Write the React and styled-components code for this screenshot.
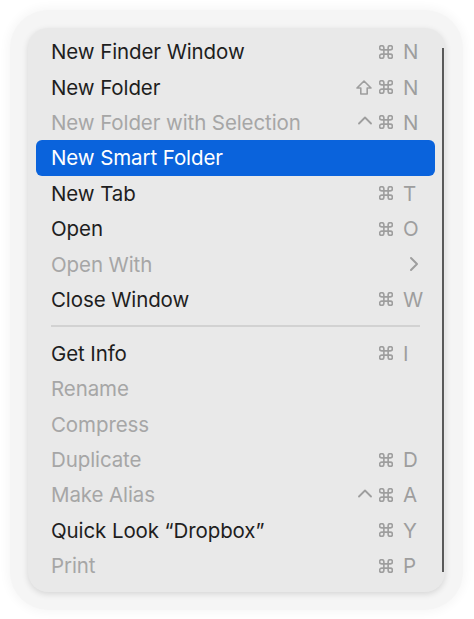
import React from 'react';
import styled, { createGlobalStyle } from 'styled-components';

const GlobalStyle = createGlobalStyle`
  html, body {
    margin: 0;
    padding: 0;
    background: #ffffff;
  }
  body {
    font-family: Inter, "Noto Sans", "Liberation Sans", sans-serif;
  }
`;

const Page = styled.div`
  width: 474px;
  height: 619px;
  padding: 28px 29px 27px 28px;
  box-sizing: border-box;
`;

const Menu = styled.div`
  position: relative;
  width: 417px;
  height: 564px;
  box-sizing: border-box;
  padding: 6px 10px 8px 8px;
  background: #e9e9e9;
  border-radius: 20px;
  box-shadow:
    0 2px 6px rgba(0, 0, 0, 0.13),
    0 0 0 18px #f5f5f5,
    0 0 10px 21px rgba(0, 0, 0, 0.035);

  &::after {
    content: '';
    position: absolute;
    top: 20px;
    bottom: 20px;
    right: 1px;
    width: 2px;
    background: #5a5a5a;
  }
`;

const Row = styled.div`
  display: flex;
  align-items: center;
  justify-content: space-between;
  height: 35.4px;
  padding: 0 14px 0 15px;
  border-radius: 6px;
  font-size: 20.5px;
  letter-spacing: -0.1px;
  color: ${(p) => (p.$active ? '#ffffff' : p.$disabled ? '#a6a6a6' : '#1e1e1e')};
  background: ${(p) => (p.$active ? '#0a63dc' : 'transparent')};
`;

const Label = styled.span`
  white-space: nowrap;
`;

const Shortcut = styled.span`
  display: flex;
  align-items: center;
  gap: 10px;
  color: ${(p) => (p.$active ? '#ffffff' : '#9e9e9e')};
`;

const Mods = styled.span`
  display: flex;
  align-items: center;
  gap: 7px;
`;

const Key = styled.span`
  width: 18px;
  text-align: left;
`;

const SubmenuArrow = styled.span`
  display: flex;
  width: 18px;
  justify-content: flex-end;
  padding-right: 2px;
`;

const Separator = styled.div`
  height: 18.6px;
  display: flex;
  align-items: center;
  padding: 0 15px;

  &::before {
    content: '';
    flex: 1;
    height: 2px;
    background: #d2d2d2;
  }
`;

const Command = () => (
  <svg width="14" height="14" viewBox="2.2 2.2 19.6 19.6" fill="none" stroke="currentColor" strokeWidth="2.3" strokeLinecap="round" strokeLinejoin="round">
    <path d="M15 6v12a3 3 0 1 0 3-3H6a3 3 0 1 0 3 3V6a3 3 0 1 0-3 3h12a3 3 0 1 0-3-3" />
  </svg>
);

const Shift = () => (
  <svg width="16" height="15" viewBox="0 0 16 15" fill="none" stroke="currentColor" strokeWidth="1.6" strokeLinejoin="round">
    <path d="M8 1L1 8h3.8v6h6.4V8H15L8 1z" />
  </svg>
);

const Control = () => (
  <svg width="14" height="14" viewBox="0 0 14 14" fill="none" stroke="currentColor" strokeWidth="1.8" strokeLinecap="round" strokeLinejoin="round">
    <path d="M1 8.5L7 2.5l6 6" />
  </svg>
);

const Chevron = () => (
  <svg width="10" height="16" viewBox="0 0 10 16" fill="none">
    <path d="M2 2l6 6-6 6" stroke="#9e9e9e" strokeWidth="2" strokeLinecap="round" strokeLinejoin="round" />
  </svg>
);

const modIcons = { shift: Shift, ctrl: Control, cmd: Command };

const groups = [
  [
    { label: 'New Finder Window', mods: ['cmd'], key: 'N' },
    { label: 'New Folder', mods: ['shift', 'cmd'], key: 'N' },
    { label: 'New Folder with Selection', mods: ['ctrl', 'cmd'], key: 'N', disabled: true },
    { label: 'New Smart Folder', active: true },
    { label: 'New Tab', mods: ['cmd'], key: 'T' },
    { label: 'Open', mods: ['cmd'], key: 'O' },
    { label: 'Open With', disabled: true, submenu: true },
    { label: 'Close Window', mods: ['cmd'], key: 'W' },
  ],
  [
    { label: 'Get Info', mods: ['cmd'], key: 'I' },
    { label: 'Rename', disabled: true },
    { label: 'Compress', disabled: true },
    { label: 'Duplicate', mods: ['cmd'], key: 'D', disabled: true },
    { label: 'Make Alias', mods: ['ctrl', 'cmd'], key: 'A', disabled: true },
    { label: 'Quick Look “Dropbox”', mods: ['cmd'], key: 'Y' },
    { label: 'Print', mods: ['cmd'], key: 'P', disabled: true },
  ],
];

const MenuItem = ({ item }) => (
  <Row $active={item.active} $disabled={item.disabled}>
    <Label>{item.label}</Label>
    {item.submenu && (
      <SubmenuArrow>
        <Chevron />
      </SubmenuArrow>
    )}
    {item.key && (
      <Shortcut $active={item.active}>
        <Mods>
          {item.mods.map((m) => {
            const Icon = modIcons[m];
            return <Icon key={m} />;
          })}
        </Mods>
        <Key>{item.key}</Key>
      </Shortcut>
    )}
  </Row>
);

const App = () => (
  <Page>
    <GlobalStyle />
    <Menu>
      {groups.map((group, i) => (
        <React.Fragment key={i}>
          {i > 0 && <Separator />}
          {group.map((item) => (
            <MenuItem key={item.label} item={item} />
          ))}
        </React.Fragment>
      ))}
    </Menu>
  </Page>
);

export default App;
